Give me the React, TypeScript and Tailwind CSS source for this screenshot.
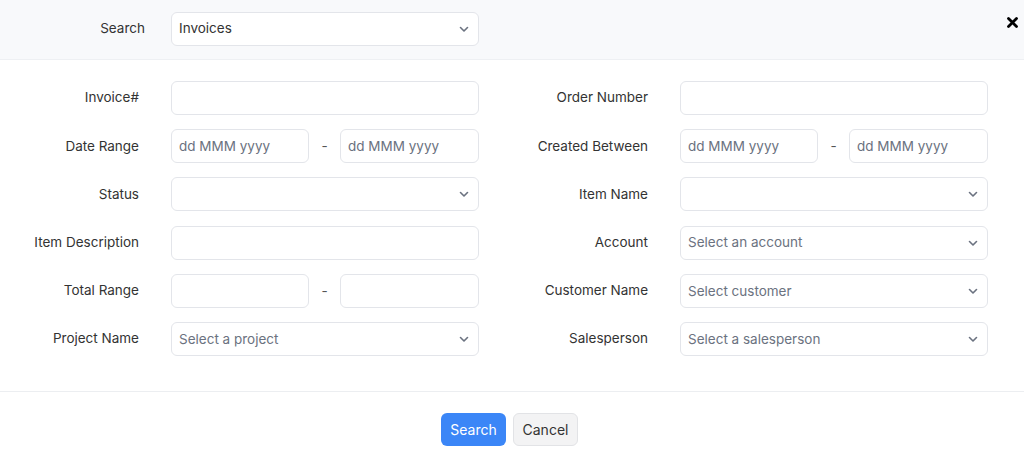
import React from 'react';

const Chevron = () => (
  <svg width="12" height="12" viewBox="0 0 12 12" fill="none" className="absolute right-[8px] top-1/2 -translate-y-1/2">
    <path d="M2.5 4.5L6 8L9.5 4.5" stroke="#6b7280" strokeWidth="1.6" strokeLinecap="round" strokeLinejoin="round" />
  </svg>
);

const inputBase =
  'h-[34px] rounded-[6px] border border-[#e3e5ea] bg-white px-[7px] text-[13.5px] text-[#333] flex items-center';

const TextBox = ({ placeholder, width = 'w-[308px]' }: { placeholder?: string; width?: string }) => (
  <div className={`${inputBase} ${width}`}>
    {placeholder && <span className="text-[#6b7280]">{placeholder}</span>}
  </div>
);

const SelectBox = ({ value, placeholder }: { value?: string; placeholder?: string }) => (
  <div className={`${inputBase} w-[308px] relative`}>
    {value && <span className="text-[#333]">{value}</span>}
    {placeholder && <span className="text-[#6b7280]">{placeholder}</span>}
    <Chevron />
  </div>
);

const RangeBox = ({ placeholder }: { placeholder?: string }) => (
  <div className="flex items-center w-[308px]">
    <TextBox placeholder={placeholder} width="w-[138px]" />
    <span className="w-[31px] text-center text-[#555]">-</span>
    <TextBox placeholder={placeholder} width="w-[139px]" />
  </div>
);

type Field = { label: string; control: React.ReactNode };

const fields: Field[] = [
  { label: 'Invoice#', control: <TextBox /> },
  { label: 'Order Number', control: <TextBox /> },
  { label: 'Date Range', control: <RangeBox placeholder="dd MMM yyyy" /> },
  { label: 'Created Between', control: <RangeBox placeholder="dd MMM yyyy" /> },
  { label: 'Status', control: <SelectBox /> },
  { label: 'Item Name', control: <SelectBox /> },
  { label: 'Item Description', control: <TextBox /> },
  { label: 'Account', control: <SelectBox placeholder="Select an account" /> },
  { label: 'Total Range', control: <RangeBox /> },
  { label: 'Customer Name', control: <SelectBox placeholder="Select customer" /> },
  { label: 'Project Name', control: <SelectBox placeholder="Select a project" /> },
  { label: 'Salesperson', control: <SelectBox placeholder="Select a salesperson" /> },
];

export default function App() {
  return (
    <div className="w-[1024px] h-[457px] bg-white text-[13.5px] text-[#333] font-['Inter','Noto_Sans',sans-serif] overflow-hidden">
      <div className="h-[60px] bg-[#f8f9fb] border-b border-[#eef0f3] flex items-center relative">
        <div className="w-[145px] text-right -mt-[2px]">Search</div>
        <div className="ml-[26px] -mt-[2px]">
          <SelectBox value="Invoices" />
        </div>
        <button className="absolute right-[6px] top-[16px] w-[12px] h-[12px] flex items-center justify-center">
          <svg width="11" height="11" viewBox="0 0 11 11">
            <path d="M1.5 1.5L9.5 9.5M9.5 1.5L1.5 9.5" stroke="#000" strokeWidth="2.8" strokeLinecap="round" />
          </svg>
        </button>
      </div>

      <div className="pt-[21px] pb-[35px] border-b border-[#eceef1] grid grid-cols-[479px_479px] gap-x-[30px] gap-y-[14.2px]">
        {fields.map((f) => (
          <div key={f.label} className="flex items-center">
            <div className="w-[139px] text-right -mt-[1px]">{f.label}</div>
            <div className="ml-[32px]">{f.control}</div>
          </div>
        ))}
      </div>

      <div className="flex justify-center gap-[7px] pt-[21px] pr-[5px]">
        <button className="h-[33px] w-[65px] rounded-[6px] bg-[#3b86f7] text-white text-[14px]">Search</button>
        <button className="h-[33px] w-[65px] rounded-[6px] bg-[#f3f3f4] border border-[#e2e3e6] text-[#333] text-[14px]">
          Cancel
        </button>
      </div>
    </div>
  );
}
